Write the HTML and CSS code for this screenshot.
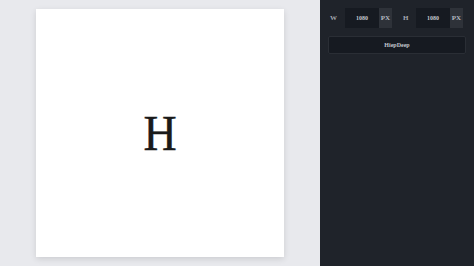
FILE: index.html
```html
<!DOCTYPE html>
<html>
<head>
<meta charset="utf-8">
<link rel="stylesheet" href="styles.css">
</head>
<body>
<div class="app">
  <main class="stage">
    <div class="canvas"><span class="glyph">H</span></div>
  </main>
  <aside class="panel">
    <div class="size-row">
      <span class="lbl">W</span>
      <span class="num">1080</span>
      <span class="unit">PX</span>
      <span class="lbl lbl-h">H</span>
      <span class="num">1080</span>
      <span class="unit">PX</span>
    </div>
    <button class="btn">HiepDeep</button>
  </aside>
</div>
</body>
</html>
```
FILE: styles.css
```css
* { box-sizing: border-box; }
html, body { margin: 0; padding: 0; }
body {
  width: 474px;
  height: 266px;
  overflow: hidden;
  font-family: "Liberation Serif", "Times New Roman", serif;
}
.app {
  display: flex;
  width: 474px;
  height: 266px;
}
.stage {
  width: 320px;
  height: 266px;
  background: #e8e9ed;
  display: flex;
  align-items: center;
  justify-content: center;
}
.canvas {
  width: 248px;
  height: 248px;
  background: #ffffff;
  box-shadow: 0 2px 6px rgba(0,0,0,0.12);
  display: flex;
  align-items: center;
  justify-content: center;
}
.glyph {
  font-size: 50px;
  color: #1a1a1a;
  line-height: 1;
  transform: scaleX(0.92);
  -webkit-text-stroke: 0.4px #1a1a1a;
}
.panel {
  width: 154px;
  height: 266px;
  background: #1f232a;
  padding: 8px 10px 0 10px;
}
.size-row {
  display: flex;
  align-items: center;
  height: 20px;
}
.lbl {
  color: #a4a8b0;
  font-size: 7px;
  font-weight: bold;
  width: 15px;
}
.lbl-h {
  width: 24px;
  padding-left: 11px;
}
.num {
  width: 34px;
  height: 20px;
  background: #161a21;
  color: #c2c6cd;
  font-size: 6px;
  font-weight: bold;
  display: flex;
  align-items: center;
  justify-content: center;
}
.unit {
  width: 13px;
  height: 20px;
  background: #2e3239;
  color: #b4b8c0;
  font-size: 7px;
  font-weight: bold;
  display: flex;
  align-items: center;
  justify-content: center;
}
.btn {
  display: block;
  margin-top: 8px;
  width: 138px;
  height: 18px;
  margin-left: -2px;
  background: #161a21;
  border: 1px solid #2a2e35;
  border-radius: 2px;
  color: #c2c6cd;
  font-family: "Liberation Serif", "Times New Roman", serif;
  font-size: 6px;
  font-weight: bold;
  padding: 0;
}
```
